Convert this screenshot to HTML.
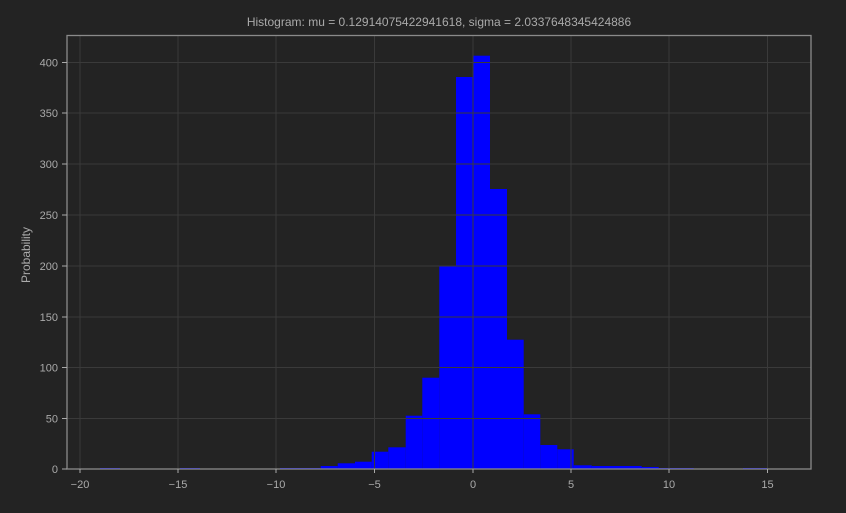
<!DOCTYPE html>
<html><head><style>
html,body{margin:0;padding:0;background:#232323;}
svg{display:block}
text{font-family:"Liberation Sans",sans-serif;fill:#aaa;font-size:11px}
</style></head><body>
<svg width="846" height="513" viewBox="0 0 846 513">
<rect width="846" height="513" fill="#232323"/>
<g fill="#0000ff">
<rect x="100" y="468" width="20" height="1"/>
<rect x="180" y="468" width="20" height="1"/>
<rect x="280" y="468" width="40" height="1"/>
<rect x="320.7" y="466" width="17" height="3"/>
<rect x="337.7" y="463.3" width="17.3" height="5.7"/>
<rect x="355" y="461.7" width="16.7" height="7.3"/>
<rect x="371.7" y="451.7" width="16.6" height="17.3"/>
<rect x="388.3" y="447.3" width="17.4" height="21.7"/>
<rect x="405.7" y="415.7" width="16.6" height="53.3"/>
<rect x="422.3" y="377.7" width="17" height="91.3"/>
<rect x="439.3" y="266.3" width="16.7" height="202.7"/>
<rect x="456" y="77" width="17.3" height="392"/>
<rect x="473.3" y="55.7" width="16.7" height="413.3"/>
<rect x="490" y="189" width="17" height="280"/>
<rect x="507" y="339.7" width="16.7" height="129.3"/>
<rect x="523.7" y="414.3" width="16.6" height="54.7"/>
<rect x="540.3" y="445" width="17" height="24"/>
<rect x="557.3" y="449.3" width="16.4" height="19.7"/>
<rect x="573.7" y="465.3" width="18" height="3.7"/>
<rect x="591.7" y="466" width="50" height="3"/>
<rect x="641.7" y="467" width="17" height="2"/>
<rect x="658.7" y="468" width="35" height="1"/>
<rect x="743" y="468" width="24" height="1"/>
</g>
<g stroke="#3a3a3a" stroke-width="1">
<line x1="80" y1="35" x2="80" y2="469"/><line x1="178" y1="35" x2="178" y2="469"/>
<line x1="276" y1="35" x2="276" y2="469"/><line x1="374.5" y1="35" x2="374.5" y2="469"/>
<line x1="473" y1="35" x2="473" y2="469"/><line x1="571" y1="35" x2="571" y2="469"/>
<line x1="669" y1="35" x2="669" y2="469"/><line x1="767.5" y1="35" x2="767.5" y2="469"/>
<line x1="67" y1="62.5" x2="811" y2="62.5"/><line x1="67" y1="113" x2="811" y2="113"/>
<line x1="67" y1="164" x2="811" y2="164"/><line x1="67" y1="215" x2="811" y2="215"/>
<line x1="67" y1="266" x2="811" y2="266"/><line x1="67" y1="317" x2="811" y2="317"/>
<line x1="67" y1="367.5" x2="811" y2="367.5"/><line x1="67" y1="418.5" x2="811" y2="418.5"/>
</g>
<rect x="67" y="35.5" width="744" height="433.5" fill="none" stroke="#8a8a8a" stroke-width="1.3"/>
<g stroke="#aaa" stroke-width="1">
<line x1="80" y1="469" x2="80" y2="473"/><line x1="178" y1="469" x2="178" y2="473"/>
<line x1="276" y1="469" x2="276" y2="473"/><line x1="374.5" y1="469" x2="374.5" y2="473"/>
<line x1="473" y1="469" x2="473" y2="473"/><line x1="571" y1="469" x2="571" y2="473"/>
<line x1="669" y1="469" x2="669" y2="473"/><line x1="767.5" y1="469" x2="767.5" y2="473"/>
<line x1="62" y1="62.5" x2="67" y2="62.5"/><line x1="62" y1="113" x2="67" y2="113"/>
<line x1="62" y1="164" x2="67" y2="164"/><line x1="62" y1="215" x2="67" y2="215"/>
<line x1="62" y1="266" x2="67" y2="266"/><line x1="62" y1="317" x2="67" y2="317"/>
<line x1="62" y1="367.5" x2="67" y2="367.5"/><line x1="62" y1="418.5" x2="67" y2="418.5"/>
<line x1="62" y1="469" x2="67" y2="469"/>
</g>
<g text-anchor="middle">
<text x="80" y="488">−20</text><text x="178" y="488">−15</text><text x="276" y="488">−10</text>
<text x="374.5" y="488">−5</text><text x="473" y="488">0</text><text x="571" y="488">5</text>
<text x="669" y="488">10</text><text x="767.5" y="488">15</text>
</g>
<g text-anchor="end">
<text x="58" y="66.5">400</text><text x="58" y="117">350</text><text x="58" y="168">300</text>
<text x="58" y="219">250</text><text x="58" y="270">200</text><text x="58" y="321">150</text>
<text x="58" y="371.5">100</text><text x="58" y="422.5">50</text><text x="58" y="473">0</text>
</g>
<text x="439" y="26" text-anchor="middle" style="font-size:12px">Histogram: mu = 0.12914075422941618, sigma = 2.0337648345424886</text>
<text transform="translate(30,255) rotate(-90)" text-anchor="middle" style="font-size:12px">Probability</text>
</svg>
</body></html>
